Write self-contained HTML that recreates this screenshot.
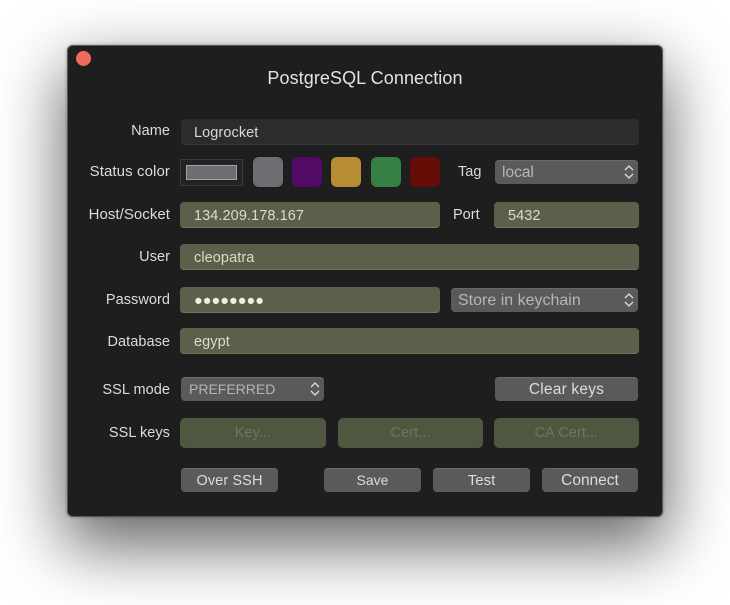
<!DOCTYPE html>
<html>
<head>
<meta charset="utf-8">
<style>
html,body{margin:0;padding:0;width:730px;height:605px;overflow:hidden;background:#fff;}
body{font-family:"Liberation Sans",sans-serif;position:relative;}
#win{position:absolute;left:67px;top:45px;width:596px;height:472px;background:#1e1e1f;border-radius:6px;box-shadow:inset 0 0 0 1px #585858,0 26px 66px 4px rgba(0,0,0,.6),0 0 3px rgba(0,0,0,.35);}
#all{position:absolute;left:0;top:0;width:730px;height:605px;filter:blur(.35px);}
.a{position:absolute;white-space:nowrap;}
.l{position:absolute;right:560px;font-size:14.5px;color:#dcdcdc;white-space:nowrap;line-height:18px;letter-spacing:.05px;}
.f{position:absolute;height:26px;background:#5a6049;border-radius:4px;box-shadow:inset 0 -1px 0 #6f765b;color:#d9dfc4;font-size:14.5px;line-height:28px;padding-left:14px;box-sizing:border-box;letter-spacing:.08px;}
.k{position:absolute;height:30px;background:#505740;border-radius:5px;color:#6f7562;font-size:14.5px;line-height:31px;text-align:center;letter-spacing:.1px;}
.b{position:absolute;height:24px;background:#5a5a5b;border-radius:4px;box-shadow:inset 0 1px 0 #696969;color:#dcdcdc;font-size:15px;line-height:26px;text-align:center;}
.s{position:absolute;height:24px;background:#5a5a5b;border-radius:4px;box-shadow:inset 0 1px 0 #696969;color:#b6b6b6;font-size:16px;line-height:25px;padding-left:7px;box-sizing:border-box;}
.s svg{position:absolute;right:3px;top:3px;}
.c{position:absolute;top:157px;width:30px;height:30px;border-radius:6px;}
</style>
</head>
<body>
<div id="win"></div>
<div id="all">
<div class="a" style="left:76px;top:51px;width:15px;height:15px;border-radius:50%;background:#ec6a5e;"></div>
<div class="a" style="left:67px;width:596px;top:68px;text-align:center;font-size:18px;line-height:21px;color:#e2e2e2;letter-spacing:.08px;">PostgreSQL Connection</div>

<div class="l" style="top:122px;">Name</div>
<div class="l" style="top:163px;font-size:15px;letter-spacing:.1px;">Status color</div>
<div class="l" style="top:206px;font-size:15px;">Host/Socket</div>
<div class="l" style="top:248px;">User</div>
<div class="l" style="top:291px;">Password</div>
<div class="l" style="top:333px;">Database</div>
<div class="l" style="top:381px;">SSL mode</div>
<div class="l" style="top:424px;">SSL keys</div>
<div class="a" style="left:458px;top:163px;font-size:14.5px;line-height:18px;color:#dcdcdc;">Tag</div>
<div class="a" style="left:453px;top:206px;font-size:14.5px;line-height:18px;color:#dcdcdc;">Port</div>

<div class="f" style="left:181px;top:119px;width:458px;padding-left:13px;background:#2c2c2d;color:#d8d8d8;box-shadow:inset 0 -1px 0 #3a3a3a;">Logrocket</div>

<div class="a" style="left:180px;top:159px;width:63px;height:27px;box-sizing:border-box;border:1px solid #3c3c3c;background:#232323;"></div>
<div class="a" style="left:186px;top:165px;width:51px;height:15px;box-sizing:border-box;border:1px solid #a2a3a6;background:#6d6e73;"></div>
<div class="c" style="left:253px;background:#6d6e72;"></div>
<div class="c" style="left:292px;background:#520a66;"></div>
<div class="c" style="left:331px;background:#b68d33;"></div>
<div class="c" style="left:371px;background:#378045;"></div>
<div class="c" style="left:410px;background:#660d08;"></div>

<div class="s" style="left:495px;top:160px;width:143px;font-size:15.5px;">local<svg width="12" height="18" viewBox="0 0 12 18"><path d="M2 7 L6 3 L10 7 M2 11 L6 15 L10 11" fill="none" stroke="#dedede" stroke-width="1.3"/></svg></div>

<div class="f" style="left:180px;top:202px;width:260px;">134.209.178.167</div>
<div class="f" style="left:494px;top:202px;width:145px;">5432</div>
<div class="f" style="left:180px;top:244px;width:459px;">cleopatra</div>
<div class="f" style="left:180px;top:287px;width:260px;"><span style="font-size:14.5px;color:#eef2d8;line-height:25px;letter-spacing:0;">●●●●●●●●</span></div>
<div class="s" style="left:451px;top:288px;width:187px;">Store in keychain<svg width="12" height="18" viewBox="0 0 12 18"><path d="M2 7 L6 3 L10 7 M2 11 L6 15 L10 11" fill="none" stroke="#dedede" stroke-width="1.3"/></svg></div>
<div class="f" style="left:180px;top:328px;width:459px;">egypt</div>

<div class="s" style="left:181px;top:377px;width:143px;font-size:14px;padding-left:8px;">PREFERRED<svg width="12" height="18" viewBox="0 0 12 18"><path d="M2 7 L6 3 L10 7 M2 11 L6 15 L10 11" fill="none" stroke="#dedede" stroke-width="1.3"/></svg></div>
<div class="b" style="left:495px;top:377px;width:143px;font-size:15.5px;letter-spacing:.2px;">Clear keys</div>

<div class="k" style="left:180px;top:418px;width:146px;">Key...</div>
<div class="k" style="left:338px;top:418px;width:145px;">Cert...</div>
<div class="k" style="left:494px;top:418px;width:145px;">CA Cert...</div>

<div class="b" style="left:181px;top:468px;width:97px;font-size:14.5px;letter-spacing:.1px;">Over SSH</div>
<div class="b" style="left:324px;top:468px;width:97px;font-size:14px;line-height:25px;">Save</div>
<div class="b" style="left:433px;top:468px;width:97px;">Test</div>
<div class="b" style="left:542px;top:468px;width:96px;font-size:15.5px;">Connect</div>
</div>
</body>
</html>
